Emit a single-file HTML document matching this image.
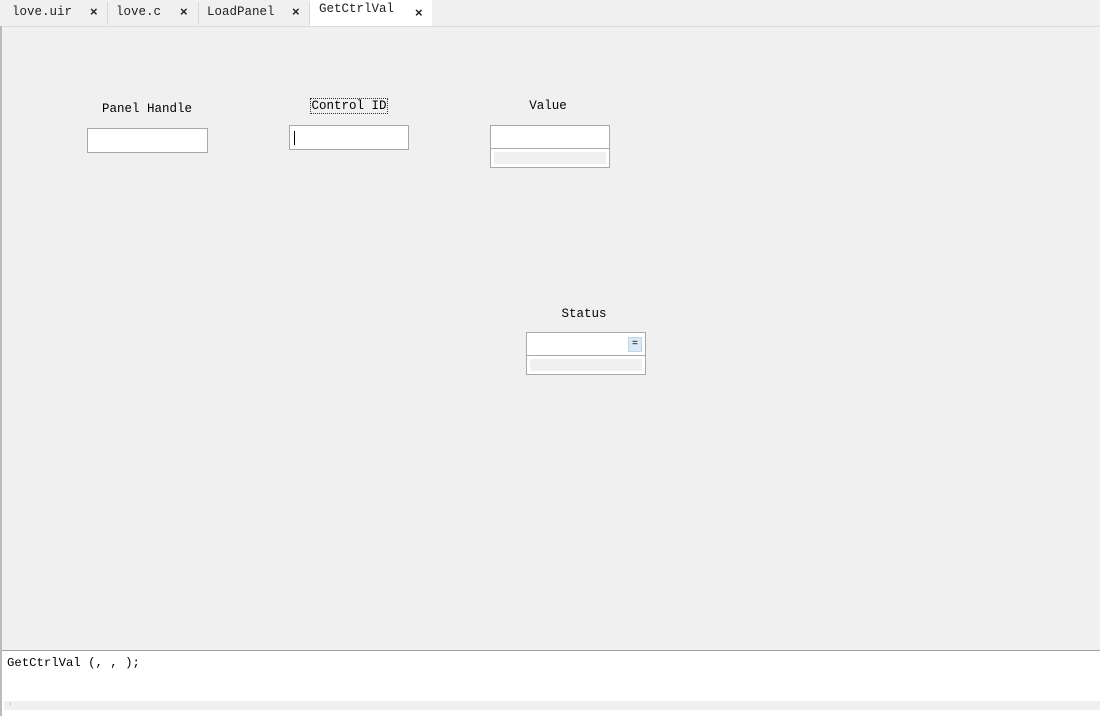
<!DOCTYPE html>
<html><head><meta charset="utf-8"><style>
body{margin:0;width:1100px;height:716px;background:#f0f0f0;position:relative;overflow:hidden;font-family:"Liberation Mono","DejaVu Sans Mono",monospace;font-size:13px;color:#000}
.abs{position:absolute}
.tabbar{left:0;top:0;width:1100px;height:26px;background:#f0f0f0;border-bottom:1px solid #dcdcdc}
.tab{top:2px;height:23px;line-height:20px;border-right:1px solid #d8d8d8;font-size:12.5px;color:#222}
.x{font-weight:bold;font-family:"Liberation Sans",sans-serif;font-size:13px}
.box{background:#fff;border:1px solid #a8a8a8;box-sizing:border-box}
.lbl{text-align:center;font-size:12.5px}
</style></head><body>
<div class="abs tabbar"></div>
<div class="abs" style="left:0;top:26px;width:2px;height:690px;background:#bbb"></div>
<div class="abs tab" style="left:4px;width:103px"><span style="margin-left:8px">love.uir</span><span class="x abs" style="left:86px">×</span></div>
<div class="abs tab" style="left:108px;width:90px"><span style="margin-left:8px">love.c</span><span class="x abs" style="left:72px">×</span></div>
<div class="abs tab" style="left:199px;width:110px"><span style="margin-left:8px">LoadPanel</span><span class="x abs" style="left:93px">×</span></div>
<div class="abs tab" style="left:310px;top:0;height:26px;width:122px;background:#fff;border:none"><span style="margin-left:9px;position:relative;top:-1px">GetCtrlVal</span><span class="x abs" style="left:105px;top:3px">×</span></div>

<div class="abs lbl" style="left:87px;top:102px;width:120px">Panel Handle</div>
<div class="abs box" style="left:87px;top:128px;width:121px;height:25px"></div>

<div class="abs lbl" style="left:289px;top:99px;width:120px"><span style="outline:1px dotted #333">Control ID</span></div>
<div class="abs box" style="left:289px;top:125px;width:120px;height:25px"><div class="abs" style="left:4px;top:5px;width:1px;height:14px;background:#000"></div></div>

<div class="abs lbl" style="left:488px;top:99px;width:120px">Value</div>
<div class="abs box" style="left:490px;top:125px;width:120px;height:43px"><div class="abs" style="left:0;top:22px;width:118px;height:1px;background:#a8a8a8"></div><div class="abs" style="left:3px;top:26px;width:112px;height:12px;background:#f0f0f0"></div></div>

<div class="abs lbl" style="left:524px;top:307px;width:120px">Status</div>
<div class="abs box" style="left:526px;top:332px;width:120px;height:43px"><div class="abs" style="left:0;top:22px;width:118px;height:1px;background:#a8a8a8"></div><div class="abs" style="left:3px;top:26px;width:112px;height:12px;background:#f0f0f0"></div>
<div class="abs" style="left:101px;top:4px;width:14px;height:15px;background:#dbe8f5;border:1px solid #c0d4ea;box-sizing:border-box;font-size:10px;line-height:13px;text-align:center">=</div></div>

<div class="abs" style="left:2px;top:650px;width:1098px;height:66px;background:#fff;border-top:1px solid #a0a0a0"></div>
<div class="abs" style="left:7px;top:656px;font-family:'Liberation Mono',monospace;font-size:12.3px">GetCtrlVal (, , );</div>
<div class="abs" style="left:4px;top:701px;width:1096px;height:9px;background:#f0f0f0;font-size:7px;color:#aaa;line-height:9px">&nbsp;‹</div>
</body></html>
